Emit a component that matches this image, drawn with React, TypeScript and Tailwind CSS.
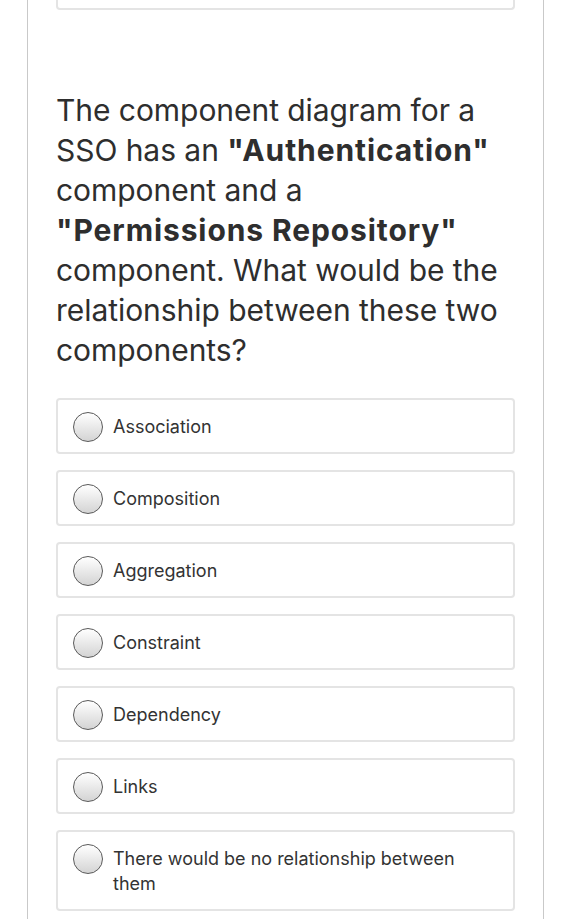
import React from "react";

const options = [
  "Association",
  "Composition",
  "Aggregation",
  "Constraint",
  "Dependency",
  "Links",
  "There would be no relationship between them",
];

function Radio() {
  return (
    <span className="shrink-0 w-[30px] h-[30px] rounded-full border-[1.5px] border-[#5a5a5a] bg-gradient-to-b from-white to-[#d4d4d4]" />
  );
}

export default function App() {
  return (
    <div
      className="min-h-[919px] bg-white overflow-hidden"
      style={{ fontFamily: "Inter, 'Noto Sans', Roboto, sans-serif" }}
    >
      <div className="ml-[27px] w-[517px] min-h-[919px] border-x border-[#c9c9c9] px-[28px]">
        <div className="h-[10px] border-2 border-t-0 border-[#e4e4e4] rounded-b-[4px]" />
        <p className="mt-[80px] text-[30px] leading-[40px] text-[#2e2e2e] tracking-[-0.05px] whitespace-nowrap">
          The component diagram for a
          <br />
          SSO has an <span className="font-bold tracking-[0.9px]">"Authentication"</span>
          <br />
          component and a
          <br />
          <span className="font-bold tracking-[0.9px]">"Permissions Repository"</span>
          <br />
          component. What would be the
          <br />
          relationship between these two
          <br />
          components?
        </p>
        <div className="mt-[28px] flex flex-col gap-[16px]">
          {options.map((o) => (
            <div
              key={o}
              className="flex items-start gap-[10px] border-2 border-[#e4e4e4] rounded-[4px] pl-[15px] pr-[15px] pt-[12px] pb-[10px]"
            >
              <Radio />
              <span className="pt-[2px] pb-[3px] text-[18px] leading-[25px] text-[#333333]">
                {o}
              </span>
            </div>
          ))}
        </div>
      </div>
    </div>
  );
}
